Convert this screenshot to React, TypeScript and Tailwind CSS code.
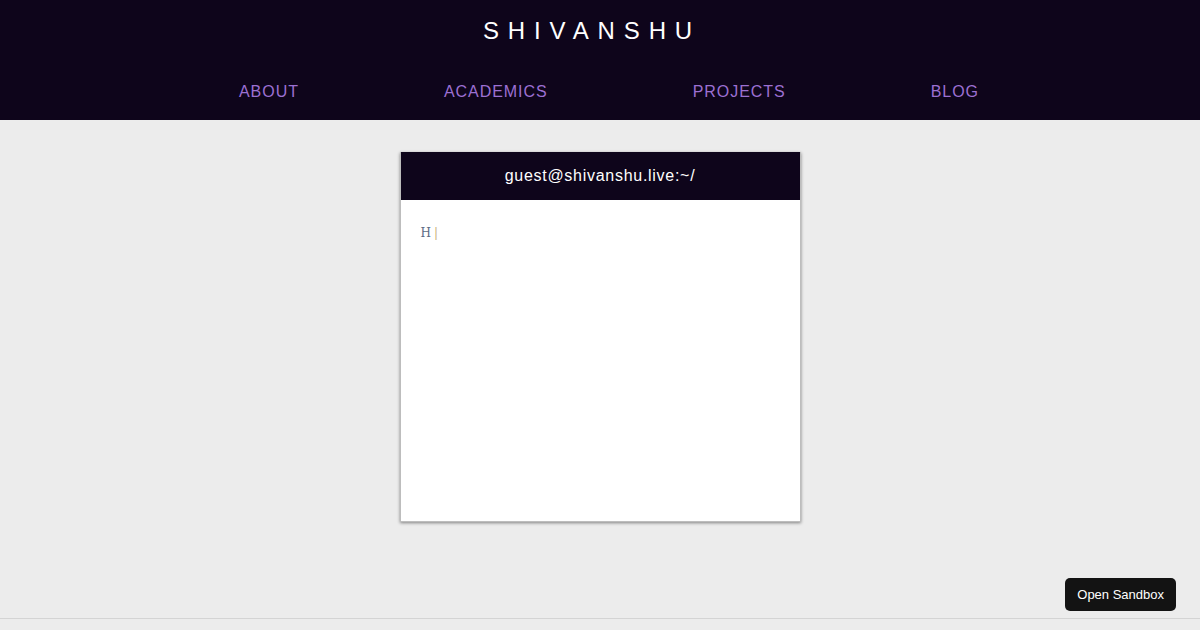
import React from 'react'

const navItems = ['ABOUT', 'ACADEMICS', 'PROJECTS', 'BLOG']

export default function App() {
  return (
    <div className="min-h-[630px] w-full bg-[#ececec] flex flex-col" style={{ fontFamily: '"Liberation Sans", Arial, sans-serif' }}>
      <header className="bg-[#0e051b] h-[120px] flex flex-col items-center">
        <h1 className="mt-[16px] text-[24px] leading-[30px] tracking-[0.37em] pr-[16px] text-white font-normal">
          SHIVANSHU
        </h1>
        <nav className="mt-[36px] flex justify-center gap-[145px] pl-[18px]">
          {navItems.map((item) => (
            <a key={item} href="#" className="text-[16px] leading-[20px] tracking-[0.06em] text-[#9c70d2]">
              {item}
            </a>
          ))}
        </nav>
      </header>

      <main className="flex-1 flex justify-center pt-[32px]">
        <div className="w-[401px] h-[370px] bg-white flex flex-col shadow-[0_1px_3px_rgba(0,0,0,0.45)] border border-[#bdbdbd] border-t-0">
          <div className="h-[48px] bg-[#0e051b] flex items-center justify-center">
            <span className="text-[16px] text-white tracking-[0.045em]">guest@shivanshu.live:~/</span>
          </div>
          <div className="px-[20px] pt-[20px]">
            <span className="text-[12px] text-[#5b6b84]" style={{ fontFamily: '"DejaVu Serif", "Liberation Serif", serif' }}>
              H<span className="ml-[3px] text-[#c9b27a]">|</span>
            </span>
          </div>
        </div>
      </main>

      <footer className="h-[53px] flex justify-end items-start pr-[24px] border-b border-[#d4d4d4] mb-[11px]">
        <button className="mt-[12px] h-[33px] px-[12px] rounded-[5px] bg-[#131313] text-white text-[13px]">
          Open Sandbox
        </button>
      </footer>
    </div>
  )
}
